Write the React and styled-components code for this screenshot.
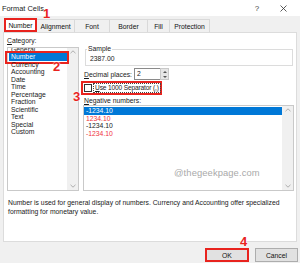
import React from 'react';
import styled, { createGlobalStyle } from 'styled-components';

const Global = createGlobalStyle`
  html, body { margin: 0; padding: 0; }
  body {
    width: 300px; height: 263px; overflow: hidden;
    background: #f0f0f0;
    font-family: "Liberation Sans", Arial, sans-serif;
    color: #1a1a1a;
  }
`;

const Dialog = styled.div`
  position: relative;
  width: 300px;
  height: 263px;
  display: flex;
  flex-direction: column;
  background: #f0f0f0;
  font-size: 6.8px;
`;

const TitleBar = styled.div`
  height: 16px;
  background: #fff;
  display: flex;
  align-items: center;
  padding: 0 4px 0 2px;
  font-size: 7.4px;
  color: #222;
`;

const Title = styled.div`
  flex: 1;
`;

const TitleButton = styled.div`
  width: 26px;
  height: 16px;
  display: flex;
  align-items: center;
  justify-content: center;
  color: #444;
  font-size: 8px;
`;

const TabStrip = styled.div`
  height: 16px;
  display: flex;
  align-items: flex-end;
  padding-left: 4px;
`;

const Tab = styled.div`
  position: relative;
  box-sizing: border-box;
  width: ${p => p.$w}px;
  height: ${p => (p.$active ? 14 : 13)}px;
  margin-left: ${p => (p.$first ? 0 : -1)}px;
  display: flex;
  align-items: center;
  justify-content: center;
  background: ${p => (p.$active ? '#fff' : '#f0f0f0')};
  border: ${p => (p.$active ? '2px solid #e8231e' : '1px solid #d9d9d9')};
  border-bottom: ${p => (p.$active ? '2px solid #e8231e' : 'none')};
  color: #111;
  z-index: ${p => (p.$active ? 2 : 1)};
`;

const Badge = styled.div`
  position: absolute;
  left: ${p => p.$x}px;
  top: ${p => p.$y}px;
  font-family: "Liberation Sans", Arial, sans-serif;
  font-weight: 700;
  font-size: 13px;
  line-height: 11px;
  color: #e8231e;
  text-shadow: 0 0 1px #fff, 0 0 2px #fff;
  z-index: 5;
  pointer-events: none;
`;

const Panel = styled.div`
  position: relative;
  box-sizing: border-box;
  margin: 0 3px;
  height: 210px;
  background: #fff;
  border: 1px solid #dcdcdc;
  padding: 3px 2px 0 3px;
  display: flex;
  flex-direction: column;
`;

const Body = styled.div`
  display: grid;
  grid-template-columns: 72px 211px;
  column-gap: 4px;
`;

const Column = styled.div`
  display: flex;
  flex-direction: column;
  min-width: 0;
`;

const Label = styled.div`
  line-height: ${p => p.$lh || 9}px;
  margin-left: ${p => p.$ml || 0}px;
  margin-top: ${p => p.$mt || 0}px;
  white-space: nowrap;
  width: ${p => (p.$w ? `${p.$w}px` : 'auto')};
  flex: none;
`;

const Key = styled.span`
  text-decoration: underline;
  text-underline-offset: 1px;
`;

const ListBox = styled.div`
  box-sizing: border-box;
  height: ${p => p.$h}px;
  margin-top: ${p => p.$mt || 0}px;
  border: 1px solid #c9c9c9;
  display: flex;
  background: #fff;
`;

const ListItems = styled.div`
  flex: 1;
  min-width: 0;
  overflow-x: visible;
  overflow-y: clip;
  padding-top: ${p => p.$pt || 0}px;
`;

const ListScroller = styled.div`
  margin-top: ${p => p.$offset || 0}px;
`;

const Item = styled.div`
  position: relative;
  height: 7.5px;
  line-height: 7.5px;
  padding-left: ${p => p.$pl || 2}px;
  margin-left: ${p => p.$ml || 0}px;
  margin-right: ${p => p.$mr || 0}px;
  white-space: nowrap;
  background: ${p => (p.$selected ? '#0078d7' : 'transparent')};
  color: ${p => (p.$selected ? '#fff' : p.$red ? '#f0323c' : '#1a1a1a')};

  ${p => p.$marked && `
    &::after {
      content: '';
      position: absolute;
      left: -4px; right: -2px; top: -2px; bottom: -3px;
      border: 2px solid #e8231e;
    }
  `}
`;

const ScrollBar = styled.div`
  width: 11px;
  flex: none;
  background: #f0f0f0;
  display: flex;
  flex-direction: column;
  justify-content: space-between;
  align-items: center;
  padding: 2px 0;
`;

const Chevron = ({ down }) => (
  <svg width="6" height="4" viewBox="0 0 6 4">
    <path
      d={down ? 'M0.5 0.8 L3 3.2 L5.5 0.8' : 'M0.5 3.2 L3 0.8 L5.5 3.2'}
      fill="none"
      stroke="#a6a6a6"
      strokeWidth="0.9"
    />
  </svg>
);

const SampleBox = styled.fieldset`
  margin: 9px 1px 0 2px;
  padding: 0 4px 1px 4px;
  border: 1px solid #dcdcdc;
  min-width: 0;
`;

const Legend = styled.legend`
  padding: 0 1px;
  margin-left: -3px;
  line-height: 8px;
  font-size: 6.8px;
`;

const SampleValue = styled.div`
  line-height: 10px;
  margin-top: 1px;
`;

const Row = styled.div`
  display: flex;
  align-items: center;
  height: ${p => p.$h || 12}px;
  margin-top: ${p => p.$mt || 0}px;
`;

const NumberInput = styled.div`
  box-sizing: border-box;
  width: 26px;
  height: 12px;
  border: 1px solid #8a8a8a;
  border-right: none;
  padding-left: 2px;
  line-height: 10px;
  background: #fff;
`;

const Spinner = styled.div`
  box-sizing: border-box;
  width: 9px;
  height: 12px;
  background: #e6e6e6;
  border: 1px solid #c8c8c8;
  display: flex;
  flex-direction: column;
  align-items: center;
  justify-content: space-around;
`;

const Arrow = styled.div`
  width: 0; height: 0;
  border-left: 2px solid transparent;
  border-right: 2px solid transparent;
  ${p => (p.$down ? 'border-top: 2px solid #555;' : 'border-bottom: 2px solid #555;')}
`;

const CheckRow = styled.div`
  position: relative;
  box-sizing: border-box;
  width: 81px;
  height: 14px;
  margin: 1px 0 0 -2px;
  border: 2px solid #e8231e;
  display: flex;
  align-items: center;
  padding-left: 1px;
`;

const CheckBox = styled.div`
  box-sizing: border-box;
  width: 8px;
  height: 8px;
  border: 1px solid #333;
  background: #fff;
  flex: none;
`;

const CheckLabel = styled.div`
  margin-left: 2px;
  padding: 0 1px;
  line-height: 8px;
  outline: 1px dotted #444;
  white-space: nowrap;
  font-size: 6.6px;
  letter-spacing: -0.15px;
`;

const Watermark = styled.div`
  position: absolute;
  left: 170px;
  top: 134px;
  font-size: 9.4px;
  color: #a9a9a9;
  letter-spacing: 0.1px;
  pointer-events: none;
`;

const Description = styled.div`
  margin: 7px 0 0 1px;
  line-height: 9px;
  white-space: nowrap;
`;

const Footer = styled.div`
  display: flex;
  justify-content: flex-end;
  gap: 6px;
  padding: 6px 2px 0 0;
`;

const Button = styled.div`
  position: relative;
  box-sizing: border-box;
  width: ${p => p.$w}px;
  height: 14px;
  display: flex;
  align-items: center;
  justify-content: center;
  background: #e1e1e1;
  border: ${p => (p.$marked ? '2px solid #e8231e' : '1px solid #adadad')};
  color: #111;
`;

const categories = [
  'General', 'Number', 'Currency', 'Accounting', 'Date', 'Time',
  'Percentage', 'Fraction', 'Scientific', 'Text', 'Special', 'Custom',
];

const negatives = [
  { text: '-1234.10', selected: true },
  { text: '1234.10', red: true },
  { text: '-1234.10' },
  { text: '-1234.10', red: true },
];

const tabs = [
  { label: 'Number', w: 33, active: true },
  { label: 'Alignment', w: 39 },
  { label: 'Font', w: 36 },
  { label: 'Border', w: 39 },
  { label: 'Fill', w: 23 },
  { label: 'Protection', w: 41 },
];

export default function App() {
  return (
    <Dialog>
      <Global />
      <TitleBar>
        <Title>Format Cells</Title>
        <TitleButton>?</TitleButton>
        <TitleButton>
          <svg width="7" height="7" viewBox="0 0 7 7">
            <path d="M0.5 0.5 L6.5 6.5 M6.5 0.5 L0.5 6.5" stroke="#333" strokeWidth="0.8" />
          </svg>
        </TitleButton>
      </TitleBar>

      <TabStrip>
        {tabs.map((t, i) => (
          <Tab key={t.label} $w={t.w} $active={t.active} $first={i === 0}>
            {t.label}
            {t.active && <Badge $x={37} $y={-12}>1</Badge>}
          </Tab>
        ))}
      </TabStrip>

      <Panel>
        <Body>
          <Column>
            <Label><Key>C</Key>ategory:</Label>
            <ListBox $h={144} $mt={2}>
              <ListItems>
                <ListScroller $offset={-2.5}>
                  {categories.map(c => (
                    <Item
                      key={c}
                      $pl={2}
                      $ml={1}
                      $selected={c === 'Number'}
                      $marked={c === 'Number'}
                    >
                      {c}
                      {c === 'Number' && <Badge $x={44} $y={8}>2</Badge>}
                    </Item>
                  ))}
                </ListScroller>
              </ListItems>
              <ScrollBar>
                <Chevron />
                <Chevron down />
              </ScrollBar>
            </ListBox>
          </Column>

          <Column>
            <SampleBox>
              <Legend>Sample</Legend>
              <SampleValue>2387.00</SampleValue>
            </SampleBox>
            <Row $mt={2}>
              <Label $ml={1} $w={50}><Key>D</Key>ecimal places:</Label>
              <NumberInput>2</NumberInput>
              <Spinner>
                <Arrow />
                <Arrow $down />
              </Spinner>
            </Row>
            <CheckRow>
              <CheckBox />
              <CheckLabel><Key>U</Key>se 1000 Separator (,)</CheckLabel>
              <Badge $x={-10} $y={8}>3</Badge>
            </CheckRow>
            <Label $ml={1} $mt={2} $lh={8}><Key>N</Key>egative numbers:</Label>
            <ListBox $h={86}>
              <ListItems $pt={1}>
                {negatives.map((n, i) => (
                  <Item key={i} $pl={2} $selected={n.selected} $red={n.red}>
                    {n.text}
                  </Item>
                ))}
              </ListItems>
              <ScrollBar>
                <Chevron />
                <Chevron down />
              </ScrollBar>
            </ListBox>
          </Column>
        </Body>

        <Description>
          Number is used for general display of numbers. Currency and Accounting offer specialized
          <br />
          formatting for monetary value.
        </Description>

        <Watermark>@thegeekpage.com</Watermark>
      </Panel>

      <Footer>
        <Button $w={44} $marked>
          OK
          <Badge $x={33} $y={-14}>4</Badge>
        </Button>
        <Button $w={43}>Cancel</Button>
      </Footer>
    </Dialog>
  );
}
